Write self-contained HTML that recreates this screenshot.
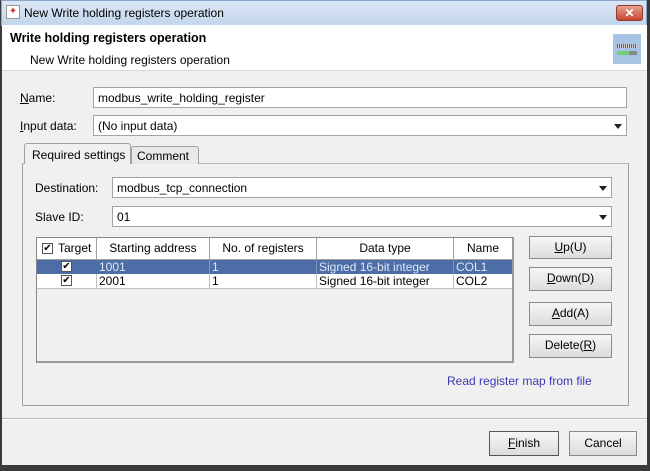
<!DOCTYPE html>
<html><head><meta charset="utf-8"><style>
*{box-sizing:border-box;margin:0;padding:0}
body{width:650px;height:471px;background:#3a3a3a;font-family:"Liberation Sans",sans-serif;font-size:12px;color:#000;position:relative;overflow:hidden}
.a{position:absolute}
.title{left:1px;top:0;width:646px;height:26px;background:linear-gradient(#dbe7f5,#c3d5ec);border:1px solid #8aa6c8;border-bottom:none}
.win{left:2px;top:25px;width:645px;height:440px;background:#f0f0f0}
.hdr{left:2px;top:25px;width:645px;height:46px;background:#fff;border-bottom:1px solid #d8d8d8}
.inp{background:#fff;border:1px solid #9ea4ab;height:21px;padding:3px 4px;font-size:12px}
.arr{position:absolute;right:4px;top:8px;width:0;height:0;border-left:4px solid transparent;border-right:4px solid transparent;border-top:5px solid #222}
.btn{background:linear-gradient(#f6f6f6,#dcdcdc);border:1px solid #8a8a8a;text-align:center;font-size:12px;line-height:21px}
.th{position:absolute;top:0;height:22px;line-height:21px;text-align:center;border-right:1px solid #a0a0a0;border-bottom:1px solid #a0a0a0;background:#fff}
.cell{position:absolute;height:14px;line-height:14px;padding-left:2px;border-right:1px solid #c0c0c0}
.cb{position:absolute;width:11px;height:11px;border:1px solid #555;background:#fff;font-size:10px;line-height:9px;text-align:center}
</style></head><body>
<div class="a title"></div>
<div class="a" style="left:6px;top:5px;width:14px;height:14px;background:#fff;border:1px solid #999;color:#c33;font-size:10px;line-height:12px;text-align:center">✦</div>
<div class="a" style="left:24px;top:6px;font-size:12px">New Write holding registers operation</div>
<div class="a" style="left:616px;top:5px;width:27px;height:16px;background:linear-gradient(#e9a090,#c8452f);border:1px solid #8b3a2c;border-radius:3px;color:#fff;font-weight:bold;text-align:center;line-height:14px;font-size:12px">✕</div>
<div class="a win"></div>
<div class="a hdr"></div>
<div class="a" style="left:10px;top:31px;font-weight:bold;font-size:12.5px">Write holding registers operation</div>
<div class="a" style="left:30px;top:53px">New Write holding registers operation</div>
<div class="a" style="left:613px;top:34px;width:28px;height:30px;background:#a8c4e4"><div class="a" style="left:4px;top:10px;width:20px;height:4px;background:repeating-linear-gradient(90deg,#666 0 1px,#ccc 1px 2px)"></div><div class="a" style="left:4px;top:17px;width:20px;height:4px;background:linear-gradient(90deg,#7c7 60%,#888 60%)"></div></div>

<div class="a" style="left:20px;top:91px"><u>N</u>ame:</div>
<div class="a inp" style="left:93px;top:87px;width:534px">modbus_write_holding_register</div>
<div class="a" style="left:20px;top:119px"><u>I</u>nput data:</div>
<div class="a inp" style="left:93px;top:115px;width:534px">(No input data)<span class="arr"></span></div>

<div class="a" style="left:22px;top:163px;width:607px;height:243px;border:1px solid #a0a0a0;border-top-color:#b8b8b8"></div>
<div class="a" style="left:24px;top:143px;width:107px;height:21px;background:#f0f0f0;border:1px solid #a0a0a0;border-bottom:none;border-radius:3px 3px 0 0;padding:4px 0 0 7px">Required settings</div>
<div class="a" style="left:131px;top:146px;width:68px;height:18px;background:#e8e8e8;border:1px solid #a0a0a0;border-bottom:none;border-radius:3px 3px 0 0;padding:2px 0 0 5px">Comment</div>

<div class="a" style="left:35px;top:181px">Destination:</div>
<div class="a inp" style="left:112px;top:177px;width:500px">modbus_tcp_connection<span class="arr"></span></div>
<div class="a" style="left:35px;top:210px">Slave ID:</div>
<div class="a inp" style="left:112px;top:206px;width:500px">01<span class="arr"></span></div>

<div class="a" style="left:36px;top:237px;width:478px;height:126px;background:#f0f0f0;border:1px solid #888;border-right:2px solid #999;border-bottom:2px solid #999">
 <div class="th" style="left:0;width:60px;text-align:left;padding-left:21px">Target</div>
 <div class="cb" style="left:5px;top:5px">✔</div>
 <div class="th" style="left:60px;width:113px">Starting address</div>
 <div class="th" style="left:173px;width:107px">No. of registers</div>
 <div class="th" style="left:280px;width:137px">Data type</div>
 <div class="th" style="left:417px;width:58px;border-right:none">Name</div>
 <div class="a" style="left:0;top:22px;width:475px;height:14px;background:#4d6da6;color:#dfe8f8">
  <div class="cb" style="left:24px;top:1px;color:#000">✔</div>
  <div class="cell" style="left:60px;width:113px;border-color:#7f95c0">1001</div>
  <div class="cell" style="left:173px;width:107px;border-color:#7f95c0">1</div>
  <div class="cell" style="left:280px;width:137px;border-color:#7f95c0">Signed 16-bit integer</div>
  <div class="cell" style="left:417px;width:58px;border:none">COL1</div>
 </div>
 <div class="a" style="left:0;top:36px;width:475px;height:15px;background:#fff;border-bottom:1px solid #c0c0c0">
  <div class="cb" style="left:24px;top:1px">✔</div>
  <div class="cell" style="left:0;width:60px"></div>
  <div class="cell" style="left:60px;width:113px">2001</div>
  <div class="cell" style="left:173px;width:107px">1</div>
  <div class="cell" style="left:280px;width:137px">Signed 16-bit integer</div>
  <div class="cell" style="left:417px;width:58px;border:none">COL2</div>
 </div>
</div>

<div class="a btn" style="left:529px;top:236px;width:83px;height:23px"><u>U</u>p(U)</div>
<div class="a btn" style="left:529px;top:267px;width:83px;height:24px"><u>D</u>own(D)</div>
<div class="a btn" style="left:529px;top:302px;width:83px;height:24px"><u>A</u>dd(A)</div>
<div class="a btn" style="left:529px;top:334px;width:83px;height:24px">Delete(<u>R</u>)</div>
<div class="a" style="left:447px;top:374px;color:#3a3ab0">Read register map from file</div>

<div class="a" style="left:2px;top:418px;width:645px;height:2px;border-top:1px solid #b8b8b8;border-bottom:1px solid #fff"></div>
<div class="a btn" style="left:489px;top:431px;width:70px;height:25px;line-height:23px;border-color:#555"><u>F</u>inish</div>
<div class="a btn" style="left:569px;top:431px;width:68px;height:25px;line-height:23px">Cancel</div>
</body></html>
